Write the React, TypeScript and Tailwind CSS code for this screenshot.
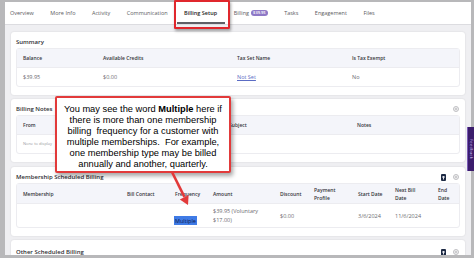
import React from "react";

function Gear() {
  return (
    <svg width="6" height="6" viewBox="0 0 12 12">
      <circle cx="6" cy="6" r="5" fill="none" stroke="#9a9aa0" strokeWidth="1.3" />
      <circle cx="6" cy="6" r="2" fill="none" stroke="#9a9aa0" strokeWidth="1.2" />
    </svg>
  );
}

function Doc() {
  return (
    <svg width="5" height="7" viewBox="0 0 10 14">
      <rect x="0" y="0" width="10" height="14" rx="2" fill="#1d2a44" />
      <rect x="3" y="4" width="4" height="4" fill="#e8e8ee" />
      <rect x="4" y="8" width="2" height="3" fill="#e8e8ee" />
    </svg>
  );
}

function Card({
  title,
  icons,
  children,
  className,
}: {
  title: string;
  icons?: "gear" | "both";
  children?: React.ReactNode;
  className?: string;
}) {
  return (
    <div className={"shrink-0 bg-white rounded-[3px] shadow-[0_0_2px_rgba(0,0,0,0.12)] px-[5px] " + (className ?? "")}>
      <div className="flex items-center h-[16px] pt-[4px]">
        <div className="text-[6px] leading-[10px] font-semibold text-[#2e2e33]">{title}</div>
        <div className="ml-auto flex items-center gap-[7px] pr-[1px]">
          {icons === "both" && <Doc />}
          {icons && <Gear />}
        </div>
      </div>
      {children}
    </div>
  );
}

function Tabs() {
  const tabs = ["Overview", "More Info", "Activity", "Communication"];
  return (
    <div className="shrink-0 h-[23px] bg-white border-b border-[#dcdce0] flex items-stretch pl-[5px] gap-[16.5px] text-[5.5px] text-[#5c5c62]">
      {tabs.map((t) => (
        <div key={t} className="flex items-center">{t}</div>
      ))}
      <div className="relative flex items-center font-semibold text-[#222]">
        Billing Setup
        <span className="absolute bottom-[0px] -left-[7px] -right-[8px] h-[2px] bg-[#5f5f66]" />
      </div>
      <div className="flex items-center">
        Billing
        <span className="ml-[2px] rounded-full bg-[#8e78c6] text-white text-[4px] leading-[6px] px-[2px] font-semibold">$39.95</span>
      </div>
      <div className="flex items-center">Tasks</div>
      <div className="flex items-center">Engagement</div>
      <div className="flex items-center">Files</div>
    </div>
  );
}

export default function App() {
  const hdr = "text-[5px] font-semibold text-[#35353a] leading-[8px]";
  const val = "text-[5.5px] text-[#6a6a70] leading-[9px]";
  return (
    <div className="relative w-[474px] h-[258px] overflow-hidden bg-[#b8b8ba] font-['Open_Sans',sans-serif]">
      <div className="ml-[5px] mt-[2px] w-[466px] h-[253px] bg-[#efeff2] flex flex-col overflow-hidden">
        <Tabs />
        <div className="shrink-0 flex flex-col px-[6px] pt-[7px]">
          {/* Summary */}
          <Card title="Summary" className="h-[63px]">
            <div className="rounded-[3px] border border-[#ececf0]">
              <div className="grid grid-cols-[80px_134px_115px_1fr] items-center h-[18px] bg-[#f4f5fa] pl-[6px]">
                <div className={hdr}>Balance</div>
                <div className={hdr}>Available Credits</div>
                <div className={hdr}>Tax Set Name</div>
                <div className={hdr}>Is Tax Exempt</div>
              </div>
              <div className="grid grid-cols-[80px_134px_115px_1fr] items-center h-[19px] border-t border-[#ececf0] pl-[6px]">
                <div className={val}>$39.95</div>
                <div className={val}>$0.00</div>
                <div className="text-[5.5px] leading-[9px] text-[#5b6cc4] underline">Not Set</div>
                <div className={val}>No</div>
              </div>
            </div>
          </Card>
          {/* Billing Notes */}
          <Card title="Billing Notes" icons="gear" className="h-[63px] mt-[4px]">
            <div className="rounded-[3px] border border-[#ececf0]">
              <div className="grid grid-cols-[206px_128px_1fr] items-center h-[18px] bg-[#f4f5fa] pl-[6px]">
                <div className={hdr}>From</div>
                <div className={hdr}>Subject</div>
                <div className={hdr}>Notes</div>
              </div>
              <div className="flex items-center h-[19px] border-t border-[#ececf0] pl-[6px]">
                <div className="text-[4px] text-[#9a9aa0]">None to display</div>
              </div>
            </div>
          </Card>
          {/* Membership Scheduled Billing */}
          <Card title="Membership Scheduled Billing" icons="both" className="h-[69px] mt-[5px]">
            <div className="rounded-[3px] border border-[#ececf0]">
              <div className="grid grid-cols-[104px_48px_38px_67px_34px_44px_37px_43px_1fr] items-center h-[19px] bg-[#f4f5fa] pl-[6px]">
                <div className={hdr}>Membership</div>
                <div className={hdr}>Bill Contact</div>
                <div className={hdr}>Frequency</div>
                <div className={hdr}>Amount</div>
                <div className={hdr}>Discount</div>
                <div className={hdr}>Payment<br />Profile</div>
                <div className={hdr}>Start Date</div>
                <div className={hdr}>Next Bill<br />Date</div>
                <div className={hdr}>End<br />Date</div>
              </div>
              <div className="grid grid-cols-[104px_48px_38px_67px_34px_44px_37px_43px_1fr] items-center h-[24px] border-t border-[#ececf0] pl-[6px]">
                <div />
                <div />
                <div className="-ml-[1px]">
                  <span className="text-[5.5px] leading-[8px] bg-[#3f7be6] text-[#0b1850] px-[1px] py-[0.5px]">Multiple</span>
                </div>
                <div className={val}>$39.95 (Voluntary<br />$17.00)</div>
                <div className={val}>$0.00</div>
                <div />
                <div className={val}>3/6/2024</div>
                <div className={val}>11/6/2024</div>
                <div />
              </div>
            </div>
          </Card>
          {/* Other Scheduled Billing */}
          <Card title="Other Scheduled Billing" icons="both" className="h-[30px] mt-[4px] pt-[2px]" />
        </div>
      </div>

      {/* red highlight around Billing Setup tab */}
      <div className="absolute left-[174px] top-[0px] w-[56px] h-[29px] border-2 border-[#e0272d] rounded-[1px] shadow-[1px_2px_3px_rgba(0,0,0,0.35)]" />

      {/* purple side tab */}
      <div className="absolute left-[467px] top-[127px] w-[7px] h-[44px] bg-[#3b1c6c] border-l border-[#7a5bb5] flex items-center justify-center">
        <span className="[writing-mode:vertical-rl] text-[4px] leading-[4px] text-[#cdbdf2] tracking-[0.3px]">Feedback</span>
      </div>

      {/* callout */}
      <div className="absolute left-[55px] top-[96px] w-[176px] h-[77px] bg-white border-2 border-[#e23a3a] rounded-[2px] shadow-[2px_3px_4px_rgba(0,0,0,0.35)] flex flex-col items-center pt-[6px] font-['Liberation_Sans',Arial,sans-serif] text-[9.3px] leading-[11px] text-black whitespace-pre">
        <span>You may see the word <b>Multiple</b> here if</span>
        <span>there is more than one membership</span>
        <span>billing  frequency for a customer with</span>
        <span>multiple memberships.  For example,</span>
        <span>one membership type may be billed</span>
        <span>annually and another, quarterly.</span>
      </div>

      {/* arrow */}
      <svg className="absolute left-0 top-0 pointer-events-none" width="474" height="258">
        <line x1="172" y1="172" x2="184.4" y2="196.8" stroke="#e23a3a" strokeWidth="2.6" />
        <polygon points="188,205 188.6,195 179.8,199.4" fill="#e23a3a" />
      </svg>
    </div>
  );
}
